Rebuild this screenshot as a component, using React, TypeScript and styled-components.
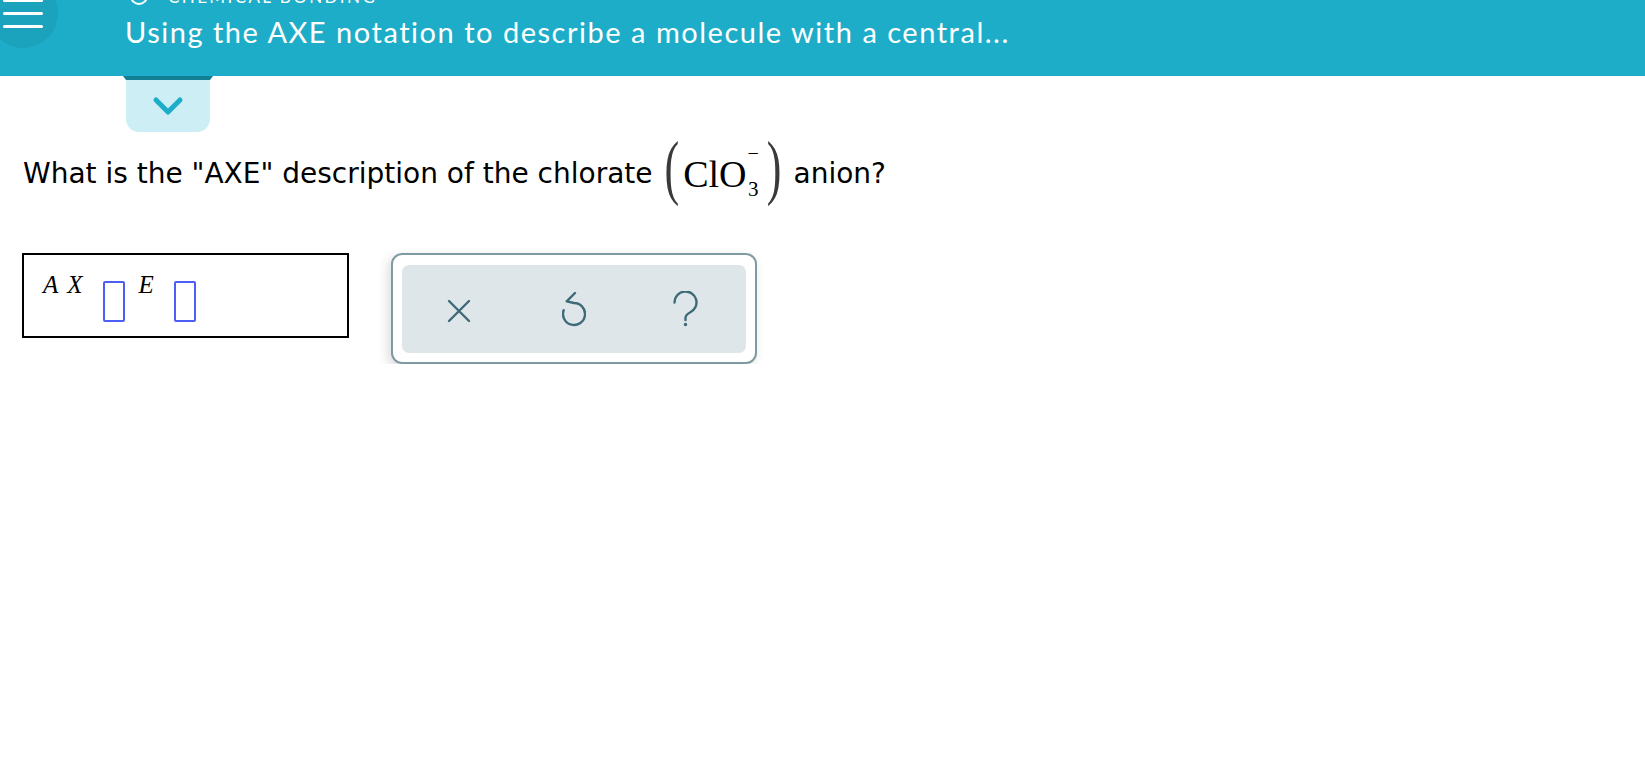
import styled, { createGlobalStyle } from "styled-components";

const GlobalStyle = createGlobalStyle`
  html, body {
    margin: 0;
    padding: 0;
    background: #fff;
  }
  body {
    font-family: "Lato", "Open Sans", sans-serif;
  }
`;

const ICON = "#3e6a78";
const SERIF = `"Liberation Serif", "DejaVu Serif", "Times New Roman", serif`;

const Header = styled.header`
  position: relative;
  height: 76px;
  background: #1eadc8;
  overflow: hidden;
  padding-left: 125px;
  display: flex;
`;

const MenuButton = styled.div`
  position: absolute;
  left: -12px;
  top: -22px;
  width: 70px;
  height: 70px;
  border-radius: 50%;
  background: #1ba2bd;
  display: flex;
  flex-direction: column;
  align-items: center;
  justify-content: center;
  gap: 10px;
  span {
    width: 40px;
    height: 3px;
    border-radius: 2px;
    background: #fff;
  }
`;

const TitleBlock = styled.div`
  display: flex;
  flex-direction: column;
  margin-top: -11px;
  gap: 9px;
`;

const Breadcrumb = styled.div`
  display: flex;
  align-items: flex-end;
  gap: 20px;
  height: 16px;
  color: #fff;
  font-size: 17px;
  line-height: 16px;
  letter-spacing: 2.4px;
  text-transform: uppercase;
  padding-left: 5px;
`;

const CrumbDot = styled.i`
  width: 14px;
  height: 14px;
  border: 2.5px solid #fff;
  border-radius: 50%;
`;

const Title = styled.h1`
  margin: 0;
  color: #fff;
  font-family: "Lato", sans-serif;
  font-weight: 400;
  font-size: 29px;
  line-height: 35px;
  letter-spacing: 1.52px;
  white-space: nowrap;
`;

const Tab = styled.div`
  position: relative;
  margin-left: 126px;
  width: 84px;
  height: 52px;
  border-top: 4px solid #137f94;
  background: #cdeef4;
  border-radius: 0 0 13px 13px;
  display: flex;
  align-items: center;
  justify-content: center;
  &::before {
    content: "";
    position: absolute;
    top: -4px;
    left: -3px;
    right: -3px;
    height: 4px;
    background: #137f94;
    clip-path: polygon(0 0, 100% 0, calc(100% - 3px) 100%, 3px 100%);
  }
`;

const Question = styled.div`
  display: flex;
  align-items: center;
  gap: 12px;
  margin-top: 9px;
  padding-left: 23px;
  font-family: "DejaVu Sans", Verdana, sans-serif;
  font-size: 28px;
  line-height: 32px;
  color: #000;
  white-space: nowrap;
`;

const Formula = styled.span`
  display: flex;
  align-items: center;
  height: 66px;
  font-family: ${SERIF};
  color: #000;
`;

const Paren = styled.span<{ $side: "l" | "r" }>`
  display: inline-block;
  font-family: ${SERIF};
  font-size: 44px;
  line-height: 44px;
  color: #3a3a3a;
  transform: translateY(-6px) scaleY(1.62);
  margin: ${(p) => (p.$side === "l" ? "0 4px 0 0" : "0 0 0 8px")};
`;

const Chem = styled.span`
  display: flex;
  align-items: flex-start;
  height: 66px;
`;

const Main = styled.span`
  font-family: ${SERIF};
  font-size: 38px;
  line-height: 66px;
`;

const Scripts = styled.span`
  display: flex;
  flex-direction: column;
  align-items: center;
  padding-top: 5px;
  margin-left: 1px;
  font-family: ${SERIF};
`;

const Sup = styled.span`
  font-size: 20px;
  line-height: 14px;
`;

const Sub = styled.span`
  font-size: 21px;
  line-height: 20px;
  margin-top: 19px;
`;

const AnswerRow = styled.div`
  display: flex;
  align-items: flex-start;
  gap: 42px;
  margin-top: 46px;
  padding-left: 22px;
`;

const AnswerBox = styled.div`
  box-sizing: border-box;
  width: 327px;
  height: 85px;
  border: 2px solid #000;
  padding: 17px 0 0 19px;
  display: flex;
  align-items: flex-start;
  color: #000;
`;

const Var = styled.span<{ $spacing?: number }>`
  font-family: ${SERIF};
  font-style: italic;
  font-size: 25px;
  line-height: 25px;
  letter-spacing: ${(p) => p.$spacing ?? 0}px;
`;

const Slot = styled.span`
  box-sizing: border-box;
  width: 22px;
  height: 41px;
  margin: 9px 14px 0 11px;
  border: 2.5px solid #4d5ef5;
  border-radius: 2px;
`;

const Toolbar = styled.div`
  box-sizing: border-box;
  width: 366px;
  height: 111px;
  border: 2px solid #7f9aa3;
  border-radius: 11px;
  padding: 10px 9px 9px;
  background: #fff;
  box-shadow: -3px 4px 12px rgba(0, 0, 0, 0.14);
`;

const ToolInner = styled.div`
  height: 100%;
  border-radius: 7px;
  background: #dfe6e9;
  display: grid;
  grid-template-columns: repeat(3, 1fr);
  align-items: center;
  justify-items: center;
`;

const ToolButton = styled.button<{ $offset?: number; $right?: number }>`
  border: 0;
  background: none;
  padding: 0;
  display: flex;
  cursor: pointer;
  margin-top: ${(p) => p.$offset ?? 0}px;
  margin-right: ${(p) => p.$right ?? 0}px;
`;

export default function App() {
  return (
    <>
      <GlobalStyle />
      <Header>
        <MenuButton>
          <span />
          <span />
          <span />
        </MenuButton>
        <TitleBlock>
          <Breadcrumb>
            <CrumbDot />
            Chemical Bonding
          </Breadcrumb>
          <Title>Using the AXE notation to describe a molecule with a central...</Title>
        </TitleBlock>
      </Header>
      <Tab>
        <svg width="36" height="24" viewBox="0 0 36 24">
          <polyline
            points="6,6 18,18 30,6"
            fill="none"
            stroke="#1eadc8"
            strokeWidth="5"
            strokeLinecap="round"
            strokeLinejoin="round"
          />
        </svg>
      </Tab>
      <Question>
        <span>What is the "AXE" description of the chlorate</span>
        <Formula>
          <Paren $side="l">(</Paren>
          <Chem>
            <Main>ClO</Main>
            <Scripts>
              <Sup>−</Sup>
              <Sub>3</Sub>
            </Scripts>
          </Chem>
          <Paren $side="r">)</Paren>
        </Formula>
        <span>anion?</span>
      </Question>
      <AnswerRow>
        <AnswerBox>
          <Var $spacing={9}>AX</Var>
          <Slot />
          <Var $spacing={9}>E</Var>
          <Slot />
        </AnswerBox>
        <Toolbar>
          <ToolInner>
            <ToolButton aria-label="clear" $offset={4}>
              <svg width="24" height="24" viewBox="0 0 24 24">
                <path d="M2 2L22 22M22 2L2 22" stroke={ICON} strokeWidth="2.4" strokeLinecap="round" />
              </svg>
            </ToolButton>
            <ToolButton aria-label="undo">
              <svg width="24" height="36" viewBox="0 0 24 36">
                <path
                  d="M13 2L4.7 10.3L12 12A11 11 0 1 1 1.7 19.2"
                  fill="none"
                  stroke={ICON}
                  strokeWidth="2.4"
                  strokeLinecap="round"
                  strokeLinejoin="round"
                />
              </svg>
            </ToolButton>
            <ToolButton aria-label="help" $right={8}>
              <svg width="28" height="36" viewBox="0 0 28 36">
                <path
                  d="M3.5 11.5A11 11 0 1 1 19 21.5C16 23 14.5 24.5 14.5 27V29"
                  fill="none"
                  stroke={ICON}
                  strokeWidth="2.4"
                  strokeLinecap="round"
                />
                <circle cx="14.5" cy="33.5" r="1.7" fill={ICON} />
              </svg>
            </ToolButton>
          </ToolInner>
        </Toolbar>
      </AnswerRow>
    </>
  );
}
